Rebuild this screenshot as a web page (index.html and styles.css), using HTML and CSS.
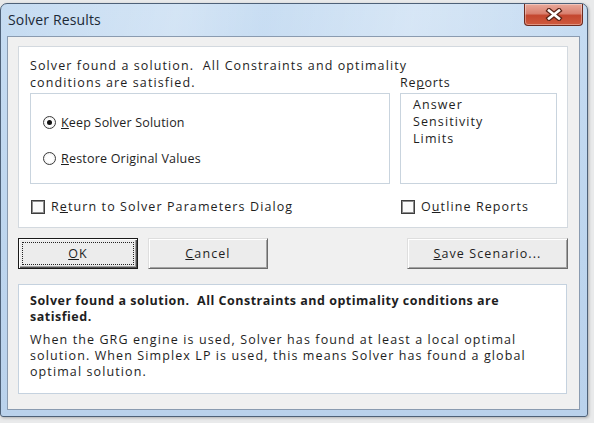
FILE: index.html
```html
<!DOCTYPE html>
<html>
<head>
<meta charset="utf-8">
<title>Solver Results</title>
<link rel="stylesheet" href="styles.css">
</head>
<body>
<div class="window">
  <div class="titlebar">
    <span class="title">Solver Results</span>
    <div class="close">
      <svg width="18" height="13" viewBox="0 0 18 13">
        <path d="M4 2.5 L14 10.5 M14 2.5 L4 10.5" stroke="#5a2418" stroke-width="5" stroke-linecap="square" fill="none"/>
        <path d="M4 2.5 L14 10.5 M14 2.5 L4 10.5" stroke="#ffffff" stroke-width="2.6" stroke-linecap="square" fill="none"/>
      </svg>
    </div>
  </div>
  <div class="client">
    <div class="panel">
      <div class="message">Solver found a solution.&nbsp; All Constraints and optimality<br>conditions are satisfied.</div>
      <div class="reports-label">Re<u>p</u>orts</div>
      <div class="options">
        <div class="radio-row"><span class="radio checked"></span><span><u>K</u>eep Solver Solution</span></div>
        <div class="radio-row"><span class="radio"></span><span><u>R</u>estore Original Values</span></div>
      </div>
      <div class="listbox">
        <div class="item">Answer</div>
        <div class="item">Sensitivity</div>
        <div class="item">Limits</div>
      </div>
      <div class="check-row"><span class="check"></span><span>R<u>e</u>turn to Solver Parameters Dialog</span></div>
      <div class="check-row"><span class="check"></span><span>O<u>u</u>tline Reports</span></div>
    </div>
    <div class="buttons">
      <div class="btn btn-default"><span class="focus"><u>O</u>K</span></div>
      <div class="btn"><u>C</u>ancel</div>
      <div class="btn btn-wide"><u>S</u>ave Scenario...</div>
    </div>
    <div class="info">
      <div class="info-title">Solver found a solution.&nbsp; All Constraints and optimality conditions are<br>satisfied.</div>
      <div class="info-body">When the GRG engine is used, Solver has found at least a local optimal<br>solution. When Simplex LP is used, this means Solver has found a global<br>optimal solution.</div>
    </div>
  </div>
</div>
</body>
</html>
```
FILE: styles.css
```css
* { box-sizing: border-box; }
html, body { margin: 0; padding: 0; }
body {
  width: 594px;
  height: 423px;
  overflow: hidden;
  background: #e9eaeb;
  font-family: "Open Sans", "Noto Sans", sans-serif;
  font-size: 12.5px;
  letter-spacing: 1.1px;
  color: #1e1e1e;
}
.window {
  margin-top: 3px;
  width: 588px;
  height: 414px;
  border: 1px solid #4e6178;
  border-radius: 7px 7px 3px 3px;
  background: linear-gradient(to bottom, #c6dcf2 0%, #bdd5ee 60%, #bad2ec 100%);
  box-shadow: 1px 1px 3px rgba(0,0,0,0.25);
  display: flex;
  flex-direction: column;
}
.titlebar {
  height: 32px;
  display: flex;
  justify-content: space-between;
  align-items: flex-start;
  padding: 0 4px 0 7px;
  border-radius: 6px 6px 0 0;
  background: linear-gradient(100deg, rgba(255,255,255,0.0) 0%, rgba(255,255,255,0.25) 30%, rgba(255,255,255,0.05) 45%, rgba(255,255,255,0.3) 70%, rgba(255,255,255,0.0) 100%);
}
.title {
  margin-top: 6px;
  font-size: 14px;
  letter-spacing: 0.15px;
  line-height: 19px;
  color: #1b2836;
}
.close {
  width: 59px;
  height: 22px;
  border: 1px solid #6d2a1e;
  border-top: none;
  border-radius: 0 0 4px 4px;
  background: linear-gradient(to bottom, #e9a99a 0%, #d98170 45%, #c4472f 55%, #cf5a3e 100%);
  box-shadow: inset 0 0 0 1px rgba(255,255,255,0.35);
  display: flex;
  align-items: center;
  justify-content: center;
}
.close svg { display: block; }
.client {
  margin: 0 7px 6px 6px;
  height: 374px;
  border: 1px solid #8a9bb0;
  background: #f0f0f0;
  padding: 9px 10px 0 10px;
  display: flex;
  flex-direction: column;
}
.panel {
  width: 550px;
  height: 182px;
  border: 1px solid #d3d9df;
  background: #ffffff;
  padding: 10px 0 0 11px;
  display: grid;
  grid-template-columns: 360px 157px;
  grid-template-rows: auto 91px auto;
  align-content: start;
  column-gap: 10px;
  line-height: 17px;
}
.message {
  white-space: nowrap;
  grid-column: 1;
  grid-row: 1;
  margin-bottom: 2px;
}
.reports-label {
  grid-column: 2;
  grid-row: 1;
  align-self: end;
  margin-bottom: 2px;
  letter-spacing: 0.7px;
}
.options {
  grid-column: 1;
  grid-row: 2;
  border: 1px solid #c9d4de;
  padding: 20px 0 0 12px;
  display: flex;
  flex-direction: column;
  gap: 19px;
  letter-spacing: 0.2px;
}
.radio-row {
  display: flex;
  align-items: center;
  gap: 5px;
}
.radio {
  width: 13px;
  height: 13px;
  border-radius: 50%;
  border: 1.6px solid #3a3a3a;
  background: radial-gradient(circle, #ffffff 40%, #e6e6e6 100%);
  display: flex;
  align-items: center;
  justify-content: center;
}
.radio.checked::after {
  content: "";
  width: 5px;
  height: 5px;
  border-radius: 50%;
  background: #111;
}
.listbox {
  grid-column: 2;
  grid-row: 2;
  border: 1px solid #c9d4de;
  padding: 2px 0 0 12px;
}
.check-row {
  grid-row: 3;
  margin-top: 14px;
  display: flex;
  align-items: center;
  gap: 6px;
  padding-left: 1px;
}
.check {
  width: 14px;
  height: 14px;
  border: 1px solid #3d3d3d;
  box-shadow: inset 0 0 0 1px #8d8d8d;
  background: #fafafa;
}
.buttons {
  margin-top: 10px;
  display: flex;
  gap: 10px;
}
.btn {
  height: 31px;
  width: 120px;
  background: #ececec;
  border: 1px solid;
  border-color: #dedede #6b6b6b #6b6b6b #dedede;
  box-shadow: inset 1px 1px 0 #ffffff, inset -1px -1px 0 #a3a3a3;
  display: flex;
  align-items: center;
  justify-content: center;
  line-height: 17px;
}
.btn-default {
  border: 1px solid #1a1a1a;
  box-shadow: inset 1px 1px 0 #ffffff, inset -1px -1px 0 #505050, inset -2px -2px 0 #a3a3a3;
  padding: 3px;
}
.focus {
  flex: 1;
  align-self: stretch;
  border: 1px dotted #222;
  display: flex;
  align-items: center;
  justify-content: center;
}
.btn-wide {
  width: 161px;
  margin-left: auto;
  margin-right: 1px;
}
.info {
  margin-top: 15px;
  width: 549px;
  height: 110px;
  border: 1px solid #c5d2df;
  background: #ffffff;
  padding: 8px 0 0 11px;
  line-height: 16px;
  white-space: nowrap;
}
.info-title {
  font-weight: bold;
  letter-spacing: 0.5px;
}
.info-body {
  margin-top: 7px;
}
```
